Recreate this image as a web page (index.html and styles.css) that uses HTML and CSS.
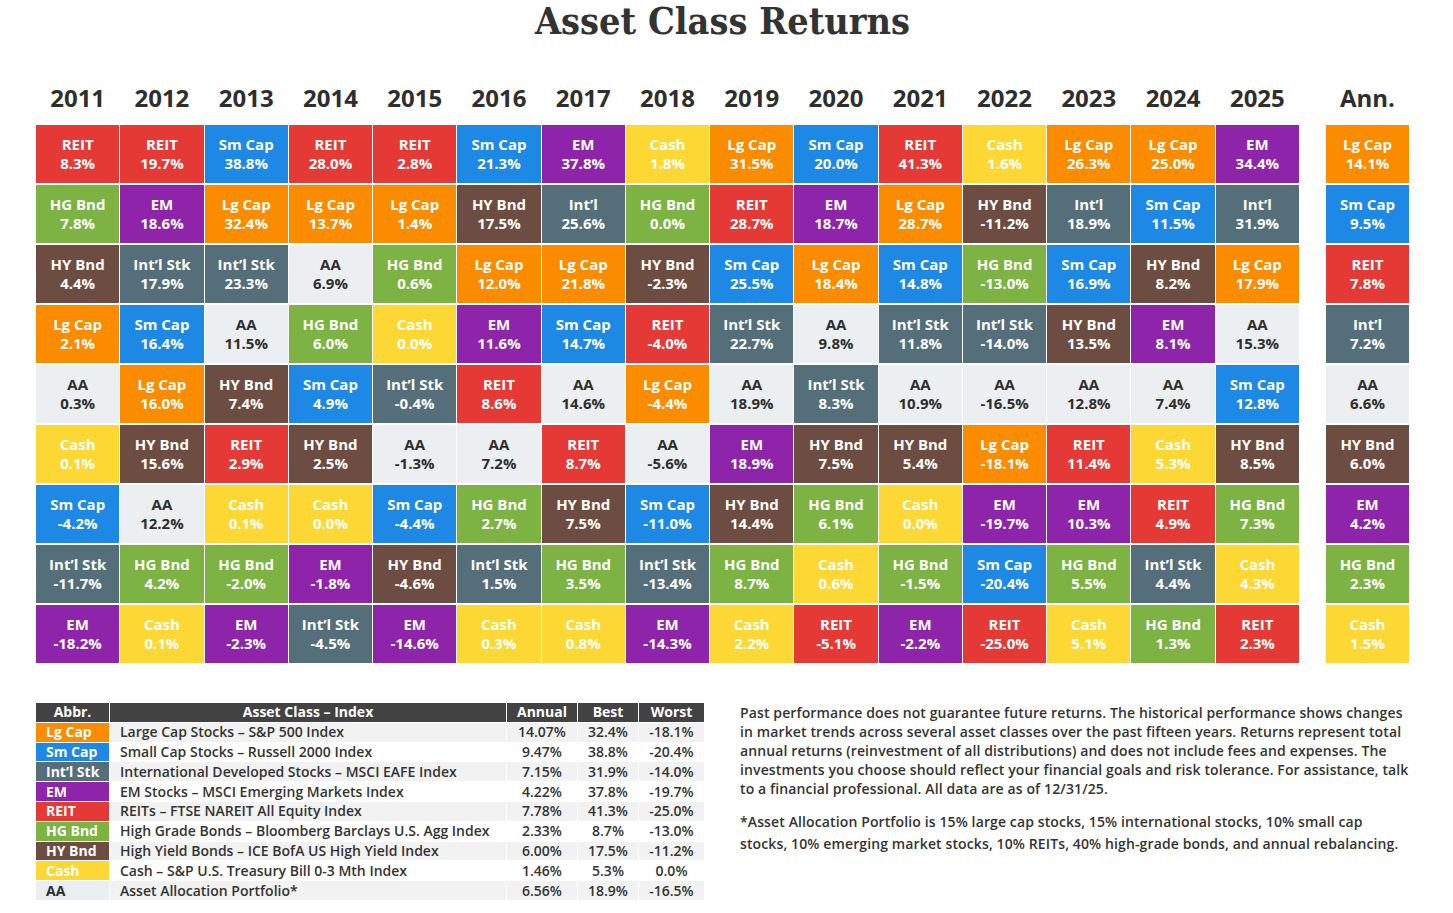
FILE: index.html
```html
<!DOCTYPE html>
<html lang="en">
<head>
<meta charset="utf-8">
<title>Asset Class Returns</title>
<link rel="stylesheet" href="styles.css">
</head>
<body>
<div class="page">
  <h1 class="title">Asset Class Returns</h1>

  <div class="chart">
    <div class="col">
      <div class="yr">2011</div>
      <div class="c reit"><span>REIT</span><span>8.3%</span></div>
      <div class="c hg"><span>HG Bnd</span><span>7.8%</span></div>
      <div class="c hy"><span>HY Bnd</span><span>4.4%</span></div>
      <div class="c lg"><span>Lg Cap</span><span>2.1%</span></div>
      <div class="c aa"><span>AA</span><span>0.3%</span></div>
      <div class="c cash"><span>Cash</span><span>0.1%</span></div>
      <div class="c sm"><span>Sm Cap</span><span>-4.2%</span></div>
      <div class="c intl"><span>Int’l Stk</span><span>-11.7%</span></div>
      <div class="c em"><span>EM</span><span>-18.2%</span></div>
    </div>
    <div class="col">
      <div class="yr">2012</div>
      <div class="c reit"><span>REIT</span><span>19.7%</span></div>
      <div class="c em"><span>EM</span><span>18.6%</span></div>
      <div class="c intl"><span>Int’l Stk</span><span>17.9%</span></div>
      <div class="c sm"><span>Sm Cap</span><span>16.4%</span></div>
      <div class="c lg"><span>Lg Cap</span><span>16.0%</span></div>
      <div class="c hy"><span>HY Bnd</span><span>15.6%</span></div>
      <div class="c aa"><span>AA</span><span>12.2%</span></div>
      <div class="c hg"><span>HG Bnd</span><span>4.2%</span></div>
      <div class="c cash"><span>Cash</span><span>0.1%</span></div>
    </div>
    <div class="col">
      <div class="yr">2013</div>
      <div class="c sm"><span>Sm Cap</span><span>38.8%</span></div>
      <div class="c lg"><span>Lg Cap</span><span>32.4%</span></div>
      <div class="c intl"><span>Int’l Stk</span><span>23.3%</span></div>
      <div class="c aa"><span>AA</span><span>11.5%</span></div>
      <div class="c hy"><span>HY Bnd</span><span>7.4%</span></div>
      <div class="c reit"><span>REIT</span><span>2.9%</span></div>
      <div class="c cash"><span>Cash</span><span>0.1%</span></div>
      <div class="c hg"><span>HG Bnd</span><span>-2.0%</span></div>
      <div class="c em"><span>EM</span><span>-2.3%</span></div>
    </div>
    <div class="col">
      <div class="yr">2014</div>
      <div class="c reit"><span>REIT</span><span>28.0%</span></div>
      <div class="c lg"><span>Lg Cap</span><span>13.7%</span></div>
      <div class="c aa"><span>AA</span><span>6.9%</span></div>
      <div class="c hg"><span>HG Bnd</span><span>6.0%</span></div>
      <div class="c sm"><span>Sm Cap</span><span>4.9%</span></div>
      <div class="c hy"><span>HY Bnd</span><span>2.5%</span></div>
      <div class="c cash"><span>Cash</span><span>0.0%</span></div>
      <div class="c em"><span>EM</span><span>-1.8%</span></div>
      <div class="c intl"><span>Int’l Stk</span><span>-4.5%</span></div>
    </div>
    <div class="col">
      <div class="yr">2015</div>
      <div class="c reit"><span>REIT</span><span>2.8%</span></div>
      <div class="c lg"><span>Lg Cap</span><span>1.4%</span></div>
      <div class="c hg"><span>HG Bnd</span><span>0.6%</span></div>
      <div class="c cash"><span>Cash</span><span>0.0%</span></div>
      <div class="c intl"><span>Int’l Stk</span><span>-0.4%</span></div>
      <div class="c aa"><span>AA</span><span>-1.3%</span></div>
      <div class="c sm"><span>Sm Cap</span><span>-4.4%</span></div>
      <div class="c hy"><span>HY Bnd</span><span>-4.6%</span></div>
      <div class="c em"><span>EM</span><span>-14.6%</span></div>
    </div>
    <div class="col">
      <div class="yr">2016</div>
      <div class="c sm"><span>Sm Cap</span><span>21.3%</span></div>
      <div class="c hy"><span>HY Bnd</span><span>17.5%</span></div>
      <div class="c lg"><span>Lg Cap</span><span>12.0%</span></div>
      <div class="c em"><span>EM</span><span>11.6%</span></div>
      <div class="c reit"><span>REIT</span><span>8.6%</span></div>
      <div class="c aa"><span>AA</span><span>7.2%</span></div>
      <div class="c hg"><span>HG Bnd</span><span>2.7%</span></div>
      <div class="c intl"><span>Int’l Stk</span><span>1.5%</span></div>
      <div class="c cash"><span>Cash</span><span>0.3%</span></div>
    </div>
    <div class="col">
      <div class="yr">2017</div>
      <div class="c em"><span>EM</span><span>37.8%</span></div>
      <div class="c intl"><span>Int’l</span><span>25.6%</span></div>
      <div class="c lg"><span>Lg Cap</span><span>21.8%</span></div>
      <div class="c sm"><span>Sm Cap</span><span>14.7%</span></div>
      <div class="c aa"><span>AA</span><span>14.6%</span></div>
      <div class="c reit"><span>REIT</span><span>8.7%</span></div>
      <div class="c hy"><span>HY Bnd</span><span>7.5%</span></div>
      <div class="c hg"><span>HG Bnd</span><span>3.5%</span></div>
      <div class="c cash"><span>Cash</span><span>0.8%</span></div>
    </div>
    <div class="col">
      <div class="yr">2018</div>
      <div class="c cash"><span>Cash</span><span>1.8%</span></div>
      <div class="c hg"><span>HG Bnd</span><span>0.0%</span></div>
      <div class="c hy"><span>HY Bnd</span><span>-2.3%</span></div>
      <div class="c reit"><span>REIT</span><span>-4.0%</span></div>
      <div class="c lg"><span>Lg Cap</span><span>-4.4%</span></div>
      <div class="c aa"><span>AA</span><span>-5.6%</span></div>
      <div class="c sm"><span>Sm Cap</span><span>-11.0%</span></div>
      <div class="c intl"><span>Int’l Stk</span><span>-13.4%</span></div>
      <div class="c em"><span>EM</span><span>-14.3%</span></div>
    </div>
    <div class="col">
      <div class="yr">2019</div>
      <div class="c lg"><span>Lg Cap</span><span>31.5%</span></div>
      <div class="c reit"><span>REIT</span><span>28.7%</span></div>
      <div class="c sm"><span>Sm Cap</span><span>25.5%</span></div>
      <div class="c intl"><span>Int’l Stk</span><span>22.7%</span></div>
      <div class="c aa"><span>AA</span><span>18.9%</span></div>
      <div class="c em"><span>EM</span><span>18.9%</span></div>
      <div class="c hy"><span>HY Bnd</span><span>14.4%</span></div>
      <div class="c hg"><span>HG Bnd</span><span>8.7%</span></div>
      <div class="c cash"><span>Cash</span><span>2.2%</span></div>
    </div>
    <div class="col">
      <div class="yr">2020</div>
      <div class="c sm"><span>Sm Cap</span><span>20.0%</span></div>
      <div class="c em"><span>EM</span><span>18.7%</span></div>
      <div class="c lg"><span>Lg Cap</span><span>18.4%</span></div>
      <div class="c aa"><span>AA</span><span>9.8%</span></div>
      <div class="c intl"><span>Int’l Stk</span><span>8.3%</span></div>
      <div class="c hy"><span>HY Bnd</span><span>7.5%</span></div>
      <div class="c hg"><span>HG Bnd</span><span>6.1%</span></div>
      <div class="c cash"><span>Cash</span><span>0.6%</span></div>
      <div class="c reit"><span>REIT</span><span>-5.1%</span></div>
    </div>
    <div class="col">
      <div class="yr">2021</div>
      <div class="c reit"><span>REIT</span><span>41.3%</span></div>
      <div class="c lg"><span>Lg Cap</span><span>28.7%</span></div>
      <div class="c sm"><span>Sm Cap</span><span>14.8%</span></div>
      <div class="c intl"><span>Int’l Stk</span><span>11.8%</span></div>
      <div class="c aa"><span>AA</span><span>10.9%</span></div>
      <div class="c hy"><span>HY Bnd</span><span>5.4%</span></div>
      <div class="c cash"><span>Cash</span><span>0.0%</span></div>
      <div class="c hg"><span>HG Bnd</span><span>-1.5%</span></div>
      <div class="c em"><span>EM</span><span>-2.2%</span></div>
    </div>
    <div class="col">
      <div class="yr">2022</div>
      <div class="c cash"><span>Cash</span><span>1.6%</span></div>
      <div class="c hy"><span>HY Bnd</span><span>-11.2%</span></div>
      <div class="c hg"><span>HG Bnd</span><span>-13.0%</span></div>
      <div class="c intl"><span>Int’l Stk</span><span>-14.0%</span></div>
      <div class="c aa"><span>AA</span><span>-16.5%</span></div>
      <div class="c lg"><span>Lg Cap</span><span>-18.1%</span></div>
      <div class="c em"><span>EM</span><span>-19.7%</span></div>
      <div class="c sm"><span>Sm Cap</span><span>-20.4%</span></div>
      <div class="c reit"><span>REIT</span><span>-25.0%</span></div>
    </div>
    <div class="col">
      <div class="yr">2023</div>
      <div class="c lg"><span>Lg Cap</span><span>26.3%</span></div>
      <div class="c intl"><span>Int’l</span><span>18.9%</span></div>
      <div class="c sm"><span>Sm Cap</span><span>16.9%</span></div>
      <div class="c hy"><span>HY Bnd</span><span>13.5%</span></div>
      <div class="c aa"><span>AA</span><span>12.8%</span></div>
      <div class="c reit"><span>REIT</span><span>11.4%</span></div>
      <div class="c em"><span>EM</span><span>10.3%</span></div>
      <div class="c hg"><span>HG Bnd</span><span>5.5%</span></div>
      <div class="c cash"><span>Cash</span><span>5.1%</span></div>
    </div>
    <div class="col">
      <div class="yr">2024</div>
      <div class="c lg"><span>Lg Cap</span><span>25.0%</span></div>
      <div class="c sm"><span>Sm Cap</span><span>11.5%</span></div>
      <div class="c hy"><span>HY Bnd</span><span>8.2%</span></div>
      <div class="c em"><span>EM</span><span>8.1%</span></div>
      <div class="c aa"><span>AA</span><span>7.4%</span></div>
      <div class="c cash"><span>Cash</span><span>5.3%</span></div>
      <div class="c reit"><span>REIT</span><span>4.9%</span></div>
      <div class="c intl"><span>Int’l Stk</span><span>4.4%</span></div>
      <div class="c hg"><span>HG Bnd</span><span>1.3%</span></div>
    </div>
    <div class="col">
      <div class="yr">2025</div>
      <div class="c em"><span>EM</span><span>34.4%</span></div>
      <div class="c intl"><span>Int’l</span><span>31.9%</span></div>
      <div class="c lg"><span>Lg Cap</span><span>17.9%</span></div>
      <div class="c aa"><span>AA</span><span>15.3%</span></div>
      <div class="c sm"><span>Sm Cap</span><span>12.8%</span></div>
      <div class="c hy"><span>HY Bnd</span><span>8.5%</span></div>
      <div class="c hg"><span>HG Bnd</span><span>7.3%</span></div>
      <div class="c cash"><span>Cash</span><span>4.3%</span></div>
      <div class="c reit"><span>REIT</span><span>2.3%</span></div>
    </div>
    <div class="col ann">
      <div class="yr">Ann.</div>
      <div class="c lg"><span>Lg Cap</span><span>14.1%</span></div>
      <div class="c sm"><span>Sm Cap</span><span>9.5%</span></div>
      <div class="c reit"><span>REIT</span><span>7.8%</span></div>
      <div class="c intl"><span>Int’l</span><span>7.2%</span></div>
      <div class="c aa"><span>AA</span><span>6.6%</span></div>
      <div class="c hy"><span>HY Bnd</span><span>6.0%</span></div>
      <div class="c em"><span>EM</span><span>4.2%</span></div>
      <div class="c hg"><span>HG Bnd</span><span>2.3%</span></div>
      <div class="c cash"><span>Cash</span><span>1.5%</span></div>
    </div>
  </div>

  <div class="bottom">
    <div class="legend">
      <div class="h">Abbr.</div>
      <div class="h">Asset Class – Index</div>
      <div class="h">Annual</div>
      <div class="h">Best</div>
      <div class="h">Worst</div>

      <div class="ab lg">Lg Cap</div>
      <div class="d g name">Large Cap Stocks – S&amp;P 500 Index</div>
      <div class="d g">14.07%</div><div class="d g">32.4%</div><div class="d g">-18.1%</div>

      <div class="ab sm">Sm Cap</div>
      <div class="d name">Small Cap Stocks – Russell 2000 Index</div>
      <div class="d">9.47%</div><div class="d">38.8%</div><div class="d">-20.4%</div>

      <div class="ab intl">Int’l Stk</div>
      <div class="d g name">International Developed Stocks – MSCI EAFE Index</div>
      <div class="d g">7.15%</div><div class="d g">31.9%</div><div class="d g">-14.0%</div>

      <div class="ab em">EM</div>
      <div class="d name">EM Stocks – MSCI Emerging Markets Index</div>
      <div class="d">4.22%</div><div class="d">37.8%</div><div class="d">-19.7%</div>

      <div class="ab reit">REIT</div>
      <div class="d g name">REITs – FTSE NAREIT All Equity Index</div>
      <div class="d g">7.78%</div><div class="d g">41.3%</div><div class="d g">-25.0%</div>

      <div class="ab hg">HG Bnd</div>
      <div class="d name">High Grade Bonds – Bloomberg Barclays U.S. Agg Index</div>
      <div class="d">2.33%</div><div class="d">8.7%</div><div class="d">-13.0%</div>

      <div class="ab hy">HY Bnd</div>
      <div class="d g name">High Yield Bonds – ICE BofA US High Yield Index</div>
      <div class="d g">6.00%</div><div class="d g">17.5%</div><div class="d g">-11.2%</div>

      <div class="ab cash">Cash</div>
      <div class="d name">Cash – S&amp;P U.S. Treasury Bill 0-3 Mth Index</div>
      <div class="d">1.46%</div><div class="d">5.3%</div><div class="d">0.0%</div>

      <div class="ab aa">AA</div>
      <div class="d g name">Asset Allocation Portfolio*</div>
      <div class="d g">6.56%</div><div class="d g">18.9%</div><div class="d g">-16.5%</div>
    </div>

    <div class="notes">
      <p class="p1">Past performance does not guarantee future returns. The historical performance shows changes in market trends across several asset classes over the past fifteen years. Returns represent total annual returns (reinvestment of all distributions) and does not include fees and expenses. The investments you choose should reflect your financial goals and risk tolerance. For assistance, talk to a financial professional. All data are as of 12/31/25.</p>
      <p class="p2">*Asset Allocation Portfolio is 15% large cap stocks, 15% international stocks, 10% small cap stocks, 10% emerging market stocks, 10% REITs, 40% high-grade bonds, and annual rebalancing.</p>
    </div>
  </div>
</div>
</body>
</html>
```

FILE: styles.css
```css
* { box-sizing: border-box; }

html, body {
  margin: 0;
  padding: 0;
  background: #ffffff;
}

body {
  font-family: "Open Sans", "Liberation Sans", sans-serif;
  color: #333333;
}

.page {
  width: 1453px;
  padding: 0 44px 0 36px;
}

.title {
  margin: 0;
  font-family: "DejaVu Serif Condensed", "DejaVu Serif", serif;
  font-stretch: condensed;
  font-weight: 700;
  font-size: 37.5px;
  line-height: 42px;
  text-align: center;
  color: #333333;
}

/* ---------- returns chart ---------- */
.chart {
  display: flex;
  gap: 1px;
  margin-top: 39px;
}

.col {
  flex: 1 1 0;
  min-width: 0;
  display: flex;
  flex-direction: column;
  gap: 2px;
}

.col.ann {
  flex: 0 0 83px;
  margin-left: 26px;
}

.yr {
  height: 34px;
  margin-bottom: 8px;
  font-size: 24px;
  line-height: 34px;
  font-weight: 700;
  text-align: center;
  color: #2e2e2e;
}

.c {
  height: 58px;
  display: flex;
  flex-direction: column;
  justify-content: center;
  align-items: center;
  font-size: 15px;
  line-height: 19px;
  font-weight: 700;
  color: #ffffff;
  white-space: nowrap;
}

.reit { background: #e53935; }
.sm   { background: #1e88e5; }
.lg   { background: #fb8c00; }
.intl { background: #546e7a; }
.em   { background: #8e24aa; }
.hg   { background: #7cb342; }
.hy   { background: #6d4c41; }
.cash { background: #fdd835; }
.aa   { background: #eceff1; color: #2e2e2e; }

/* ---------- bottom ---------- */
.bottom {
  display: flex;
  margin-top: 40px;
}

.legend {
  display: grid;
  grid-template-columns: 73px 396px 70px 60px 65px;
  grid-auto-rows: 18.8px;
  column-gap: 1px;
  row-gap: 1px;
  font-size: 14px;
  line-height: 18px;
  font-weight: 600;
  flex: 0 0 auto;
}

.legend .h {
  background: #424242;
  color: #ffffff;
  font-weight: 700;
  text-align: center;
  display: flex;
  align-items: center;
  justify-content: center;
}

.legend .ab {
  display: flex;
  align-items: center;
  padding-left: 10px;
  color: #ffffff;
  font-weight: 700;
}

.legend .ab.aa { color: #2e2e2e; }

.legend .d {
  display: flex;
  align-items: center;
  justify-content: center;
  color: #333333;
  background: #ffffff;
  white-space: nowrap;
}

.legend .d.g { background: #f2f2f2; }

.legend .d.name {
  justify-content: flex-start;
  padding-left: 10px;
}

.notes {
  margin-left: 36px;
  width: 676px;
  font-size: 14px;
  font-weight: 600;
  letter-spacing: 0.12px;
  color: #333333;
}

.notes p { margin: 0; }

.p1 {
  line-height: 19px;
}

.p2 {
  margin-top: 13px !important;
  line-height: 22px;
}
```
